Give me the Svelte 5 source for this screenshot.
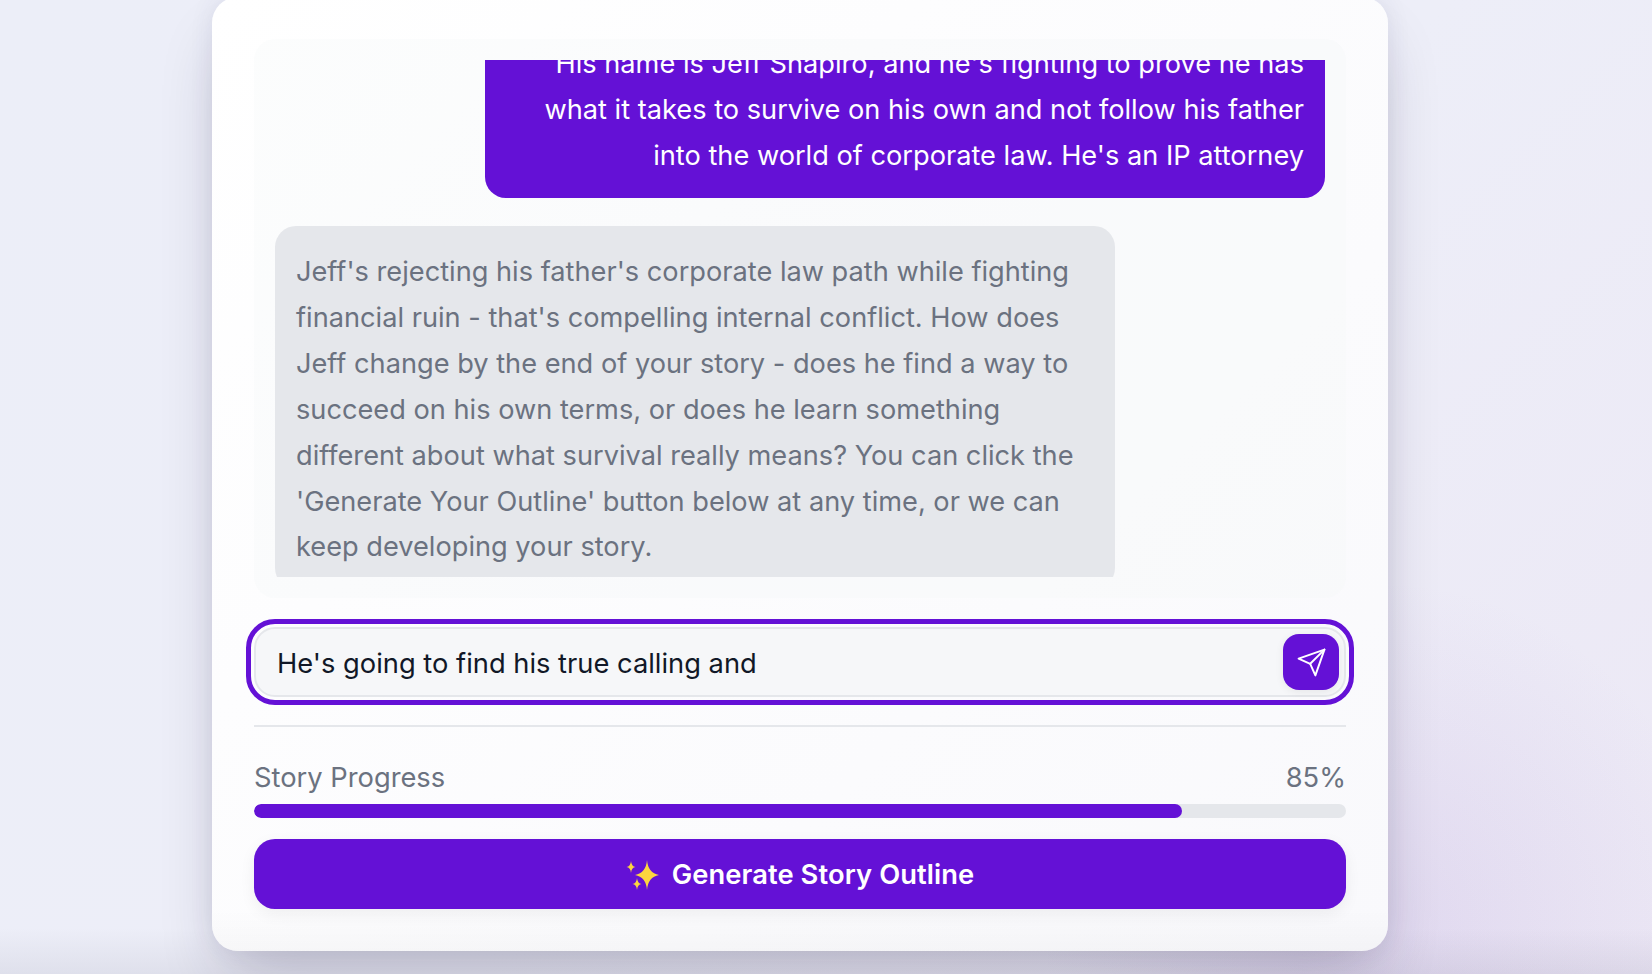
<script>
  import { onMount } from "svelte";

  let scroller;
  let draft = "He's going to find his true calling and";
  let progress = 85;

  onMount(() => {
    scroller.scrollTop = 42;
  });
</script>

<div class="page">
  <div class="card">
    <div class="messages">
      <div class="scroller" bind:this={scroller}>
        <div class="bubble user">
          His name is Jeff Shapiro, and he's fighting to prove he has what it takes to survive on his own and not follow his father into the world of corporate law. He's an IP attorney
        </div>
        <div class="bubble bot">
          Jeff's rejecting his father's corporate law path while fighting financial ruin - that's compelling internal conflict. How does Jeff change by the end of your story - does he find a way to succeed on his own terms, or does he learn something different about what survival really means? You can click the 'Generate Your Outline' button below at any time, or we can keep developing your story.
        </div>
      </div>
    </div>

    <div class="composer">
      <input type="text" value={draft} />
      <button class="send" aria-label="Send">
        <svg width="31" height="31" viewBox="0 0 24 24" fill="none" stroke="white" stroke-width="1.5" stroke-linecap="round" stroke-linejoin="round">
          <line x1="22" y1="2" x2="11" y2="13" />
          <polygon points="22 2 15 22 11 13 2 9 22 2" />
        </svg>
      </button>
    </div>

    <div class="footer">
      <div class="progress-head">
        <span>Story Progress</span>
        <span>{progress}%</span>
      </div>
      <div class="track">
        <div class="fill" style="width: {progress}%"></div>
      </div>
      <button class="generate">
        <svg class="sparkles" width="34" height="34" viewBox="0 0 34 34">
          <path fill="#fcd53f" d="M21 2 Q22 15 33 17 Q22 19 21 32 Q20 19 9 17 Q20 15 21 2 Z" />
          <path fill="#fcd53f" d="M5 3 Q5.5 8.5 9.5 9 Q5.5 9.5 5 15 Q4.5 9.5 0.5 9 Q4.5 8.5 5 3 Z" />
          <path fill="#fcd53f" d="M11 20 Q11.5 25.5 15.5 26 Q11.5 26.5 11 32 Q10.5 26.5 6.5 26 Q10.5 25.5 11 20 Z" />
        </svg>
        <span>Generate Story Outline</span>
      </button>
    </div>
  </div>
</div>

<style>
  :global(body) {
    margin: 0;
    font-family: Inter, "Liberation Sans", sans-serif;
  }

  .page {
    height: 974px;
    box-sizing: border-box;
    overflow: hidden;
    display: flex;
    justify-content: flex-start;
    align-items: flex-end;
    padding: 0 0 23px 212px;
    background:
      linear-gradient(to top, rgba(40, 40, 70, 0.07), rgba(40, 40, 70, 0) 46px),
      radial-gradient(circle 340px at 1380px 920px, rgba(150, 110, 200, 0.14), rgba(150, 110, 200, 0)),
      linear-gradient(135deg, #eceef8 0%, #edeef8 55%, #ece8f5 100%);
  }

  .card {
    width: 1176px;
    height: 954px;
    flex: none;
    box-sizing: border-box;
    padding: 42px;
    border-radius: 26px;
    background:
      linear-gradient(to top, rgba(0, 0, 0, 0.025), rgba(0, 0, 0, 0) 42px),
      linear-gradient(135deg, #ffffff 0%, #f9f9fc 100%);
    box-shadow:
      0 33px 66px -16px rgba(30, 20, 60, 0.24),
      0 0 24px rgba(50, 50, 100, 0.09);
    display: flex;
    flex-direction: column;
  }

  .messages {
    height: 559px;
    flex: none;
    box-sizing: border-box;
    padding: 21px;
    border-radius: 21px;
    background: rgba(243, 244, 248, 0.22);
  }

  .scroller {
    height: 517px;
    overflow: hidden;
    display: flex;
    flex-direction: column;
    gap: 28px;
  }

  .bubble {
    flex: none;
    width: 840px;
    box-sizing: border-box;
    padding: 23px 21px 19px;
    border-radius: 21px;
    font-size: 27.2px;
    line-height: 45.94px;
  }

  .user {
    align-self: flex-end;
    background: #6411d6;
    color: #fff;
    text-align: right;
  }

  .bot {
    background: #e5e7eb;
    color: #6b7280;
  }

  .composer {
    position: relative;
    margin-top: 29px;
    display: flex;
  }

  .composer input {
    flex: 1;
    height: 70px;
    box-sizing: border-box;
    padding: 2px 72px 0 21px;
    border: 2px solid #e5e7eb;
    border-radius: 21px;
    background: #f6f7f9;
    color: #111827;
    font: inherit;
    font-size: 27.3px;
    outline: 5px solid #6411d6;
    outline-offset: 3px;
  }

  .send {
    position: absolute;
    top: 7px;
    right: 7px;
    width: 56px;
    height: 56px;
    padding: 0;
    border: none;
    border-radius: 16px;
    background: #6411d6;
    display: flex;
    align-items: center;
    justify-content: center;
    box-shadow: 0 2px 8px rgba(0, 0, 0, 0.07);
  }

  .footer {
    margin-top: 28px;
    padding-top: 33px;
    border-top: 2px solid #e5e7eb;
  }

  .progress-head {
    display: flex;
    justify-content: space-between;
    font-size: 27.3px;
    line-height: 36px;
    color: #6b7280;
  }

  .track {
    height: 14px;
    margin-top: 8px;
    border-radius: 7px;
    background: #e5e7eb;
    overflow: hidden;
  }

  .fill {
    height: 100%;
    border-radius: 7px;
    background: #6411d6;
  }

  .generate {
    width: 100%;
    height: 70px;
    margin-top: 21px;
    padding-top: 2px;
    border: none;
    border-radius: 21px;
    background: #6411d6;
    color: #fff;
    font: inherit;
    font-size: 27.3px;
    font-weight: 600;
    letter-spacing: 0.1px;
    display: flex;
    align-items: center;
    justify-content: center;
    gap: 12px;
    box-shadow: 0 5px 16px rgba(0, 0, 0, 0.06);
  }
</style>
